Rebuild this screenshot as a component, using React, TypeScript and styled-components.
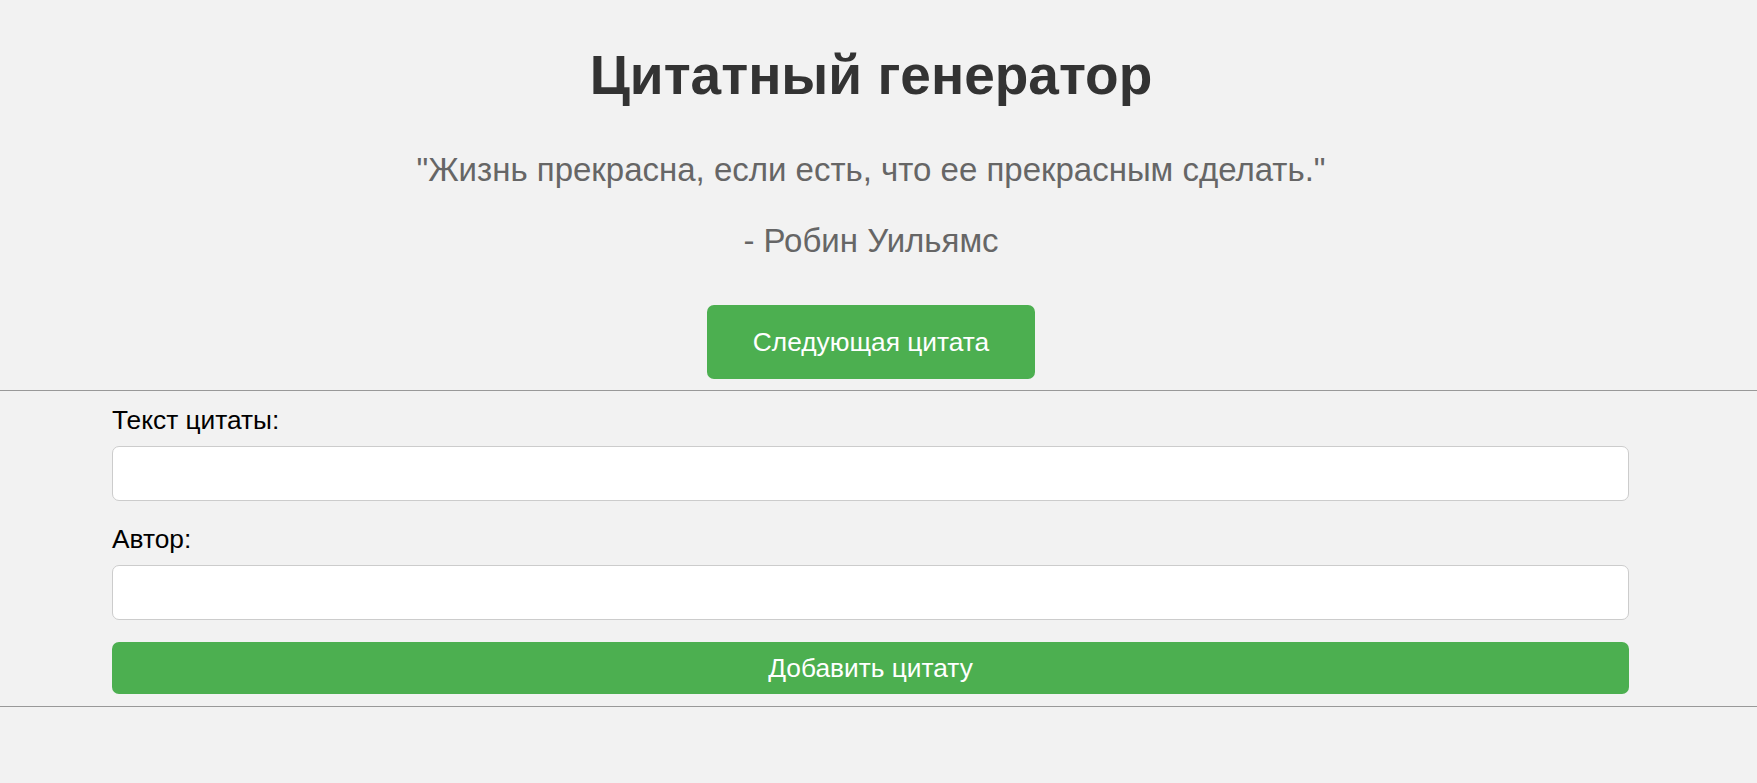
import styled, { createGlobalStyle } from "styled-components"

const GlobalStyle = createGlobalStyle`
  body {
    margin: 0;
    background: #f2f2f2;
    font-family: "Liberation Sans", Arial, sans-serif;
  }
`

const Page = styled.div`
  display: flex;
  flex-direction: column;
`

const Hero = styled.div`
  display: flex;
  flex-direction: column;
  align-items: center;
  padding: 43px 15px 0 0;
`

const Title = styled.h1`
  margin: 0;
  font-size: 55px;
  line-height: 64px;
  font-weight: 700;
  color: #333;
`

const Quote = styled.p<{ $top: number }>`
  margin: ${p => p.$top}px 0 0;
  font-size: 33px;
  line-height: 40px;
  color: #666;
`

const Button = styled.button<{ $wide?: boolean }>`
  border: none;
  background: #4caf50;
  color: #fff;
  font-family: "Liberation Sans", Arial, sans-serif;
  font-size: 26.3px;
  cursor: pointer;
  border-radius: 7px;
  height: ${p => (p.$wide ? 52 : 74)}px;
  padding: ${p => (p.$wide ? "0" : "0 46px")};
  width: ${p => (p.$wide ? "100%" : "auto")};
`

const NextButton = styled(Button)`
  margin-top: 44px;
`

const Rule = styled.hr<{ $top: number }>`
  margin: ${p => p.$top}px 0 0;
  border: none;
  border-top: 1px solid #999;
  height: 0;
`

const Form = styled.form`
  display: flex;
  flex-direction: column;
  padding: 15px 128px 12px 112px;
`

const Label = styled.label<{ $top?: number }>`
  margin-top: ${p => p.$top ?? 0}px;
  font-size: 26.3px;
  line-height: 29px;
  color: #000;
`

const Input = styled.input`
  box-sizing: border-box;
  margin-top: 11px;
  height: 55px;
  width: 100%;
  border: 1px solid #ccc;
  border-radius: 7px;
  background: #fff;
  font-size: 22.4px;
  padding: 0 14px;
  font-family: "Liberation Sans", Arial, sans-serif;
`

const AddButton = styled(Button)`
  margin-top: 22px;
`

export default function App() {
  return (
    <Page>
      <GlobalStyle />
      <Hero>
        <Title>Цитатный генератор</Title>
        <Quote $top={43}>"Жизнь прекрасна, если есть, что ее прекрасным сделать."</Quote>
        <Quote $top={31}>- Робин Уильямс</Quote>
        <NextButton type="button">Следующая цитата</NextButton>
      </Hero>
      <Rule $top={11} />
      <Form onSubmit={e => e.preventDefault()}>
        <Label htmlFor="quote-text">Текст цитаты:</Label>
        <Input id="quote-text" type="text" />
        <Label htmlFor="quote-author" $top={24}>Автор:</Label>
        <Input id="quote-author" type="text" />
        <AddButton type="submit" $wide>Добавить цитату</AddButton>
      </Form>
      <Rule $top={0} />
    </Page>
  )
}
